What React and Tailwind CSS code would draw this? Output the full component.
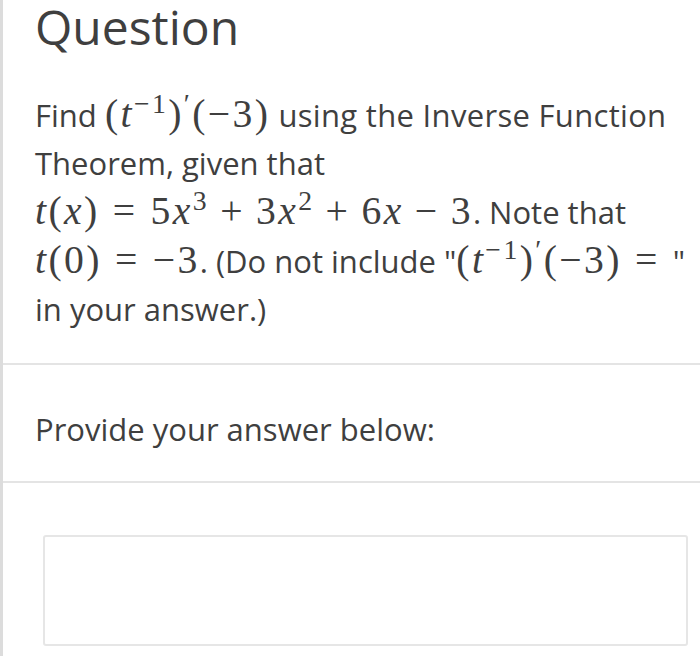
const Sup = ({ children }) => (
  <sup className="text-[0.7em] leading-none relative -top-[0.5em] align-baseline">{children}</sup>
);

const Rel = ({ children }) => <span className="mx-[0.33em]">{children}</span>;
const Bin = ({ children }) => <span className="mx-[0.28em]">{children}</span>;

const M = ({ children }) => (
  <span className="font-['Liberation_Serif',serif] text-[1.28em] tracking-[0.06em] whitespace-nowrap">
    {children}
  </span>
);

const InvPrime = () => (
  <>
    (<i>t</i>
    <Sup>−1</Sup>)<Sup>′</Sup>(−3)
  </>
);

export default function App() {
  return (
    <div className="min-h-screen bg-white border-l-[3px] border-[#dcdcdc] font-['Open_Sans',sans-serif] text-[#3f3f3f]">
      <section className="pl-[32px] pr-3 pt-[3px] pb-[30px]">
        <h1 className="text-[48px] leading-none font-normal">Question</h1>
        <p className="mt-[39px] text-[31px] leading-[48px]">
          Find{' '}
          <M>
            <InvPrime />
          </M>{' '}
          <span className="tracking-[0.01em]">using the Inverse Function</span>
          <br />
          Theorem, given that
          <br />
          <M>
            <i>t</i>(<i>x</i>)<Rel>=</Rel>5<i>x</i>
            <Sup>3</Sup>
            <Bin>+</Bin>3<i>x</i>
            <Sup>2</Sup>
            <Bin>+</Bin>6<i>x</i>
            <Bin>−</Bin>3
          </M>
          . Note that
          <br />
          <M>
            <i>t</i>(0)<Rel>=</Rel>−3
          </M>
          . (Do not include "
          <M>
            <InvPrime />
            <Rel>=</Rel>
          </M>
          "
          <br />
          in your answer.)
        </p>
      </section>
      <hr className="border-0 h-[2px] bg-[#e4e4e4]" />
      <section className="pl-[32px] pr-3 pt-[40px] pb-[28px]">
        <p className="text-[31px] leading-[48px]">Provide your answer below:</p>
      </section>
      <hr className="border-0 h-[2px] bg-[#e4e4e4]" />
      <section className="pl-[40px] pr-[12px] pt-[52px]">
        <textarea className="block w-full h-[111px] border-2 border-[#e6e6e6] rounded-[3px] resize-none outline-none" />
      </section>
    </div>
  );
}
